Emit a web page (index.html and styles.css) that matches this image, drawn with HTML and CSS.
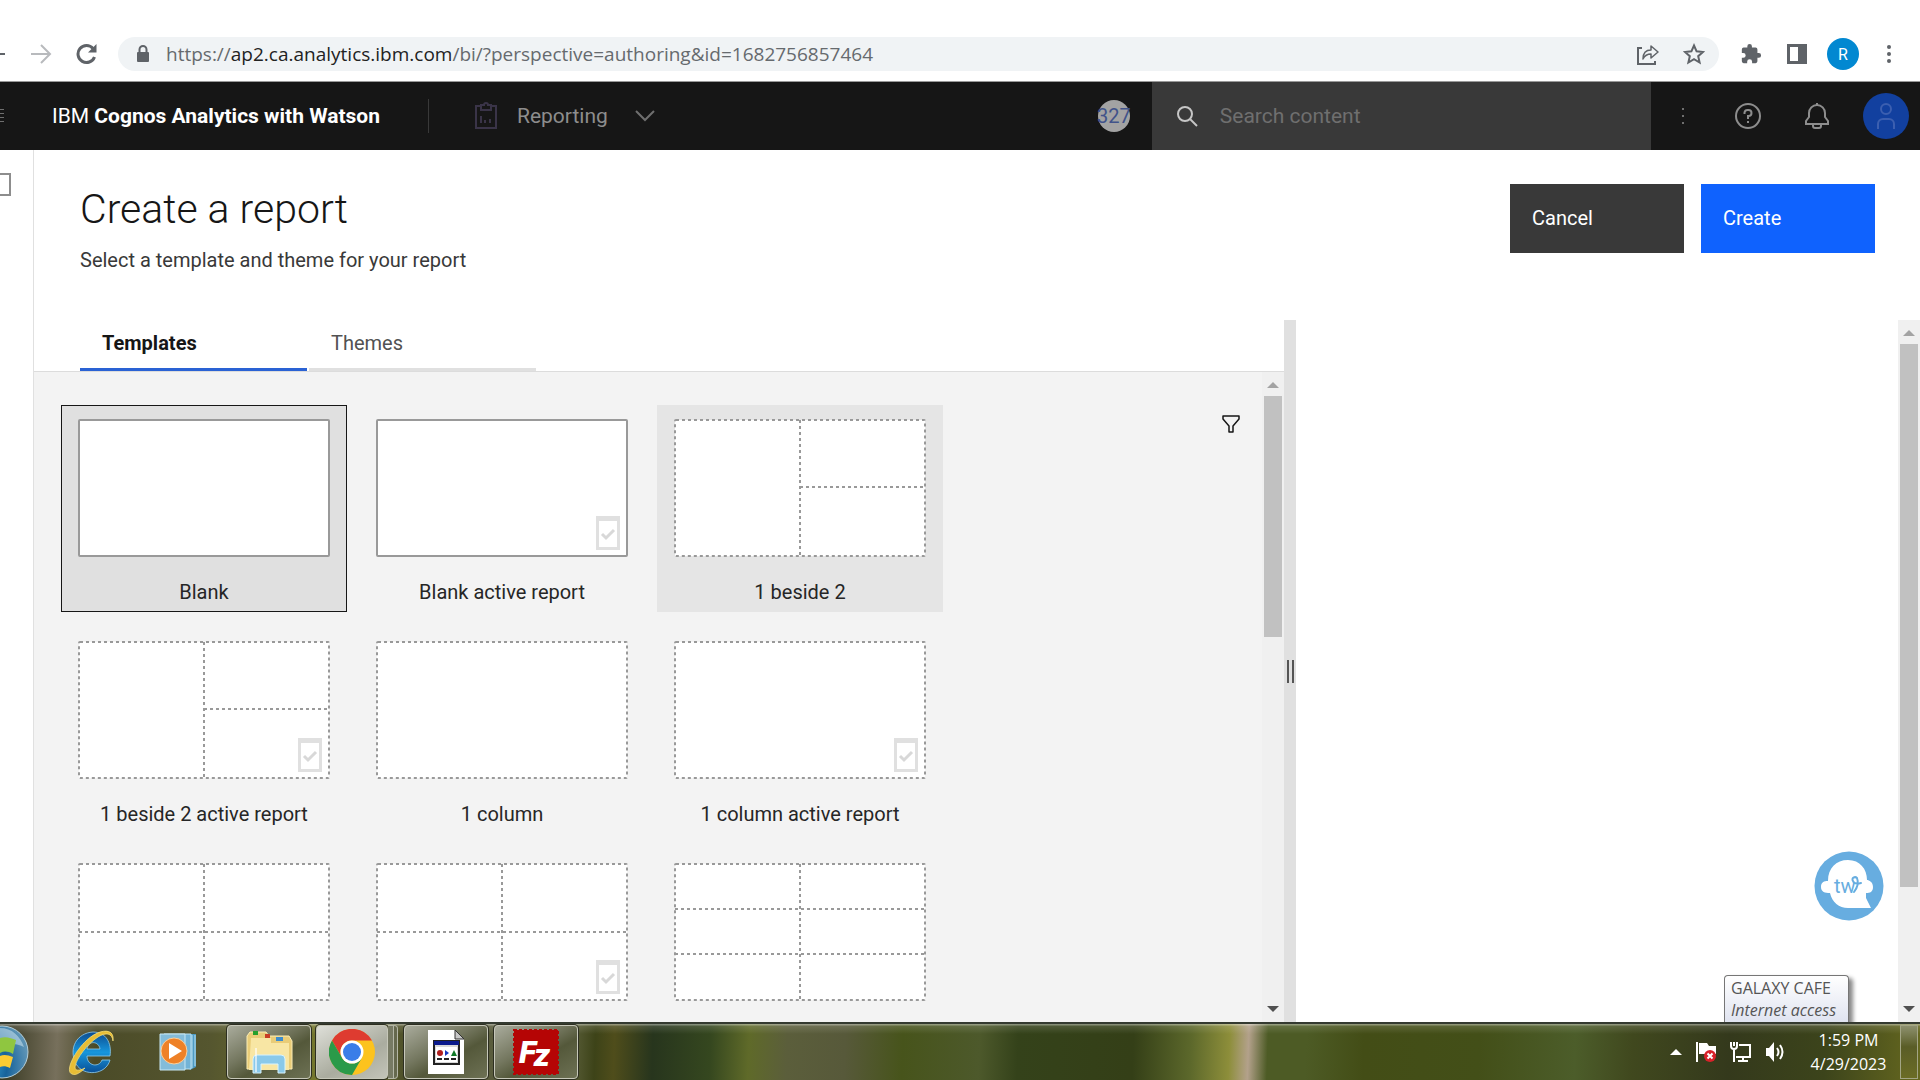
FILE: index.html
```html
<!DOCTYPE html>
<html lang="en">
<head>
<meta charset="utf-8">
<title>IBM Cognos Analytics with Watson</title>
<link rel="stylesheet" href="styles.css">
</head>
<body>
<svg class="defs" aria-hidden="true">
  <symbol id="frame" viewBox="0 0 252 138"><rect x="1" y="1" width="250" height="136" rx="1"/></symbol>
  <symbol id="report" viewBox="0 0 24 34"><path d="M1.500 1v31.500h21V1" fill="#fff" stroke="#e0e0e0" stroke-width="3"/><path d="M0 0h24v5H0z" fill="#e0e0e0" stroke="none"/><path d="M6 18l4 4 8-8" fill="none" stroke="#d8d8d8" stroke-width="3"/></symbol>
</svg>
<div class="screen">
  <header class="browser">
    <button class="plain back" aria-label="Back"><svg width="8" height="22" viewBox="0 0 8 22"><path d="M0 11h5" stroke="#5f6368" stroke-width="2"/></svg></button>
    <button class="plain" aria-label="Forward"><svg width="22" height="22" viewBox="0 0 22 22" fill="none" stroke="#b8babd" stroke-width="2"><path d="M1 11h18M11 2l9 9-9 9"/></svg></button>
    <button class="plain reload" aria-label="Reload"><svg width="22" height="22" viewBox="0 0 22 22" fill="none" stroke="#5f6368" stroke-width="3"><path d="M18.500 14a8.500 8.500 0 1 1-1.500-8.500"/><path d="M20.500 1v8.500H12z" fill="#5f6368" stroke="none"/></svg></button>
    <div class="omnibox">
      <svg width="14" height="18" viewBox="0 0 14 18"><rect x="1" y="7" width="12" height="10" rx="1" fill="#5f6368"/><path d="M3.500 8V4.500a3.500 3.500 0 0 1 7 0V8" fill="none" stroke="#5f6368" stroke-width="2"/></svg>
      <span class="url">https://<b>ap2.ca.analytics.ibm.com</b>/bi/?perspective=authoring&amp;id=1682756857464</span>
      <button class="plain" aria-label="Share"><svg width="22" height="22" viewBox="0 0 22 22" fill="none" stroke="#5f6368" stroke-width="2"><path d="M5 5H1v16h17v-3"/><path d="M6 16c0-6 3-9 8-9V3l7 6-7 6v-4c-4 0-6 1-8 5z" stroke-width="1.500" stroke-linejoin="round"/></svg></button>
      <button class="plain" aria-label="Bookmark"><svg width="22" height="22" viewBox="0 0 22 22" fill="none" stroke="#5f6368" stroke-width="2"><path d="M11 2.500l2.600 5.800 6.400.7-4.800 4.200 1.400 6.300-5.600-3.300-5.600 3.300 1.400-6.300L2 9l6.400-.7z"/></svg></button>
    </div>
    <button class="plain" aria-label="Extensions"><svg width="22" height="22" viewBox="0 0 24 24" fill="#5f6368"><path d="M20.500 11H19V7a2 2 0 0 0-2-2h-4V3.500a2.500 2.500 0 0 0-5 0V5H4a2 2 0 0 0-2 2v3.800h1.500a2.700 2.700 0 0 1 0 5.400H2V20a2 2 0 0 0 2 2h3.800v-1.500a2.700 2.700 0 0 1 5.400 0V22H17a2 2 0 0 0 2-2v-4h1.500a2.500 2.500 0 0 0 0-5z"/></svg></button>
    <button class="plain" aria-label="Side panel"><svg width="22" height="22" viewBox="0 0 22 22"><path d="M1 1h20v20H1zM4 4v14h8V4z" fill="#5f6368" fill-rule="evenodd"/></svg></button>
    <button class="profile">R</button>
    <button class="plain" aria-label="Menu"><svg width="6" height="22" viewBox="0 0 6 22" fill="#5f6368"><circle cx="3" cy="4" r="2"/><circle cx="3" cy="11" r="2"/><circle cx="3" cy="18" r="2"/></svg></button>
  </header>

  <nav class="appbar">
    <button class="plain" aria-label="Open menu"><svg width="4" height="16" viewBox="0 0 4 16" stroke="#6f6f6f"><path d="M0 1.500h4M0 5.500h4M0 9.500h4M0 13.500h4"/></svg></button>
    <a class="brand" href="#">IBM <b>Cognos Analytics with Watson</b></a>
    <button class="plain switcher">
      <svg width="22" height="28" viewBox="0 0 22 28" fill="none" stroke="#3a3448" stroke-width="2"><path d="M6 4H1v22h20V4h-5"/><path d="M6 3h3a2 2 0 0 1 4 0h3v5H6zM6 14v7M10 18v3M15 17v4"/></svg>
      <span>Reporting</span>
      <svg class="chev" width="20" height="12" viewBox="0 0 20 12" fill="none" stroke="#6f6f6f" stroke-width="2"><path d="M1 1l9 9 9-9"/></svg>
    </button>
    <span class="count">327</span>
    <label class="search">
      <svg width="22" height="22" viewBox="0 0 22 22" fill="none" stroke="#c6c6c6" stroke-width="2"><circle cx="9" cy="9" r="7"/><path d="M14 14l7 7"/></svg>
      <input type="search" placeholder="Search content" aria-label="Search content">
    </label>
    <div class="tools">
      <button class="plain more" aria-label="More"><svg width="4" height="18" viewBox="0 0 4 18" fill="#6f6f6f"><path d="M1 1h2v2H1zM1 8h2v2H1zM1 15h2v2H1z"/></svg></button>
      <button class="plain" aria-label="Help"><svg width="26" height="26" viewBox="0 0 26 26" fill="none" stroke="#8d8d8d" stroke-width="2"><circle cx="13" cy="13" r="12"/><path d="M9.500 11V9.500a3 3 0 0 1 3-2.500h1a3 3 0 0 1 0 6H13v3M13 18v2"/></svg></button>
      <button class="plain bell" aria-label="Notifications"><svg width="26" height="26" viewBox="0 0 26 26" fill="none" stroke="#8d8d8d" stroke-width="2"><path d="M13 0v3M2 21v-3l3-4v-4a8 8 0 0 1 16 0v4l3 4v3zM9 21v2a2 2 0 0 0 2 2h4a2 2 0 0 0 2-2v-2"/></svg></button>
      <button class="avatar" aria-label="Account"><svg width="20" height="26" viewBox="0 0 20 26" fill="none" stroke="#3c5fb0" stroke-width="2"><circle cx="10" cy="6" r="5"/><path d="M2 26v-5a5 5 0 0 1 5-5h6a5 5 0 0 1 5 5v5"/></svg></button>
    </div>
  </nav>

  <div class="workspace">
    <aside class="rail"><svg width="11" height="24" viewBox="0 0 11 24" fill="none" stroke="#8d8d8d" stroke-width="2"><path d="M0 1h10v21H0"/></svg></aside>
    <main class="page">
      <div class="heading">
        <div class="titles">
          <h1>Create a report</h1>
          <p>Select a template and theme for your report</p>
        </div>
        <button class="action cancel">Cancel</button>
        <button class="action create">Create</button>
      </div>
      <div class="split">
        <section class="chooser">
          <div class="tabs" role="tablist">
            <button class="tab active" role="tab" aria-selected="true">Templates</button>
            <button class="tab" role="tab" aria-selected="false">Themes</button>
          </div>
          <div class="gallery">
            <div class="cards">
              <button class="card selected"><svg class="thumb solid" viewBox="0 0 252 138"><use href="#frame"/></svg><span>Blank</span></button>
              <button class="card"><svg class="thumb solid" viewBox="0 0 252 138"><use href="#frame"/><use href="#report" x="220" y="97" width="24" height="34"/></svg><span>Blank active report</span></button>
              <button class="card hovered"><svg class="thumb" viewBox="0 0 252 138"><use href="#frame"/><path d="M126 1v136M126 68h125"/></svg><span>1 beside 2</span></button>
              <button class="card"><svg class="thumb" viewBox="0 0 252 138"><use href="#frame"/><path d="M126 1v136M126 68h125"/><use href="#report" x="220" y="97" width="24" height="34"/></svg><span>1 beside 2 active report</span></button>
              <button class="card"><svg class="thumb" viewBox="0 0 252 138"><use href="#frame"/></svg><span>1 column</span></button>
              <button class="card"><svg class="thumb" viewBox="0 0 252 138"><use href="#frame"/><use href="#report" x="220" y="97" width="24" height="34"/></svg><span>1 column active report</span></button>
              <button class="card"><svg class="thumb" viewBox="0 0 252 138"><use href="#frame"/><path d="M126 1v136M1 69h250"/></svg></button>
              <button class="card"><svg class="thumb" viewBox="0 0 252 138"><use href="#frame"/><path d="M126 1v136M1 69h250"/><use href="#report" x="220" y="97" width="24" height="34"/></svg></button>
              <button class="card"><svg class="thumb" viewBox="0 0 252 138"><use href="#frame"/><path d="M126 1v136M1 46h250M1 91h250"/></svg></button>
            </div>
            <button class="plain filter" aria-label="Filter"><svg width="20" height="20" viewBox="0 0 20 20" fill="none" stroke="#161616" stroke-width="1.500" stroke-linejoin="round"><path d="M2 2h16v3l-6 7v6H8v-6L2 5z"/></svg></button>
            <div class="scroll">
              <svg width="12" height="6" viewBox="0 0 12 6"><path d="M0 6l6-6 6 6z" fill="#a3a3a3"/></svg>
              <div class="track"><div class="bar short"></div></div>
              <svg width="12" height="6" viewBox="0 0 12 6"><path d="M0 0l6 6 6-6z" fill="#505050"/></svg>
            </div>
          </div>
        </section>
        <div class="divider"><i class="grip"></i></div>
        <section class="preview">
          <div class="scroll">
            <svg width="12" height="6" viewBox="0 0 12 6"><path d="M0 6l6-6 6 6z" fill="#a3a3a3"/></svg>
            <div class="track"><div class="bar long"></div></div>
            <svg width="12" height="6" viewBox="0 0 12 6"><path d="M0 0l6 6 6-6z" fill="#505050"/></svg>
          </div>
          <button class="plain chat" aria-label="Chat"><svg width="70" height="70" viewBox="0 0 70 70"><circle cx="35" cy="35" r="34.500" fill="#67ade0"/><path d="M14 30C14 17 22 9 34 9s19 9 19 20c2 0 6 2 6 7s-3 6-7 6v5l5 10H34c-9 0-16-6-18-15-5 0-9-1-9-6s3-6 7-6z" fill="#fff"/><text class="chat-mark" x="20" y="42">tw</text><path d="M40 41c3-4 5-9 3-14-2-2-6 0-4 3 1 3 4 3 8 2" fill="none" stroke="#67ade0" stroke-width="2" stroke-linecap="round"/></svg></button>
        </section>
      </div>
    </main>
  </div>

  <div class="tooltip" role="tooltip"><div>GALAXY CAFE</div><em>Internet access</em></div>

  <footer class="taskbar">
    <button class="plain orb" aria-label="Start"><svg width="29" height="56" viewBox="0 0 29 56"><defs><radialGradient id="orbfill" cx="0" cy=".75" r="1"><stop offset="0" stop-color="#4cc5f2"/><stop offset=".6" stop-color="#17639b"/><stop offset="1" stop-color="#5c93b5"/></radialGradient></defs><circle cx="2" cy="28" r="26" fill="url(#orbfill)" stroke="#b6cfd8" stroke-width="1"/><path d="M0 4c12 0 20 8 24 19-8-4-16-4-24-2z" fill="#d9eef6" opacity=".5"/><path d="M0 14c6-2 11 0 16 2l-3 14c-5-3-9-3-13-1z" fill="#8fc640"/><path d="M0 32c4-2 8-1 13 1l-3 11c-4-2-7-2-10-1z" fill="#fbcb32"/></svg></button>
    <button class="plain" aria-label="Internet Explorer"><svg width="48" height="48" viewBox="0 0 48 48"><defs><linearGradient id="iefill" x2="0" y2="1"><stop offset="0" stop-color="#0c4b8f"/><stop offset=".5" stop-color="#1796dc"/><stop offset="1" stop-color="#0a4f96"/></linearGradient></defs><path d="M43 28H20c0 10 12 12 15 4h8C39 47 17 49 9 36 1 20 10 5 26 4c13 0 19 11 17 24zM20 21h13c-1-8-12-9-13 0z" fill="url(#iefill)" stroke="#8ecdf0" stroke-width=".8"/><path d="M46 13C48-1 32 1 20 12 6 25-2 44 5 46c4 2 9-2 13-6-6 3-10 3-10-1 1-8 12-23 23-30 8-5 14-4 15 4z" fill="#e8bd35" stroke="#f8e27e" stroke-width=".7"/></svg></button>
    <button class="plain media" aria-label="Media Player"><svg width="38" height="40" viewBox="0 0 38 40"><path d="M9 2h28v33l-6 3z" fill="#4e9bc4"/><path d="M5 2h27v35H5zM33 3v33M36 3v31" fill="#72b3d6" stroke="#b9e1f2"/><path d="M1 2h25v36H1z" fill="#84bcd9" stroke="#c8e8f4"/><circle cx="15" cy="19" r="13" fill="#ee8127" stroke="#fbd09c"/><path d="M10 11v16l13-8z" fill="#fff"/></svg></button>
    <button class="task explorer" aria-label="Explorer"><svg width="48" height="48" viewBox="0 0 48 48"><path d="M2 8l3-4h16l3 4h20l3 5v28H2z" fill="#e9cc77" stroke="#fbedb7"/><path d="M6 10h20v5h18v27H4z" fill="#f8e6a4"/><path d="M8 3h5v4H8z" fill="#25a02c"/><path d="M20 6h5v4h-5z" fill="#c83d25"/><path d="M31 9h7v4h-7z" fill="#3e8ccb"/><path d="M8 45V31q0-4 4-4h24q4 0 4 4v14h-7V36H16v9z" fill="#8ac9ea" stroke="#d9f3fd"/><path d="M11 20v24" stroke="#fff" stroke-width="2" opacity=".6"/></svg></button>
    <button class="task chrome" aria-label="Chrome"><svg width="46" height="46" viewBox="0 0 46 46"><circle cx="23" cy="23" r="23" fill="#fcc31e"/><path d="M3 11.500A23 23 0 0 1 43 11.500H23A11.500 11.500 0 0 0 13 28.800z" fill="#de3b30"/><path d="M3 11.500A23 23 0 0 0 23 46L33 28.800A11.500 11.500 0 0 1 13 28.800z" fill="#2a9a49"/><circle cx="23" cy="23" r="11.500" fill="#fff"/><circle cx="23" cy="23" r="9" fill="#3a7de8"/></svg></button>
    <span class="stack"></span>
    <button class="task doc" aria-label="Program"><svg width="36" height="44" viewBox="0 0 36 44"><path d="M0 0h27l9 9v35H0z" fill="#fff"/><path d="M27 0v9h9z" fill="#c8c8c8" stroke="#333"/><path d="M6 11h25v23H6z" fill="#d8d8d8" stroke="#222" stroke-width="2"/><path d="M6 11h25v4H6z" fill="#0a1a8c"/><path d="M8 17h21v15H8z" fill="#fff"/><circle cx="12" cy="23" r="3" fill="#b01e1e"/><path d="M17 20l4 3-4 3z" fill="#1838c0"/><path d="M23 26l3-6 3 6z" fill="#107a28"/><path d="M9 29h19" stroke="#222" stroke-width="2" stroke-dasharray="5 2"/></svg></button>
    <button class="task fz" aria-label="FileZilla"><svg width="46" height="46" viewBox="0 0 46 46"><rect x="1" y="1" width="44" height="44" fill="#b50505" stroke="#b50505" stroke-width="2" stroke-dasharray="3 2"/><text class="fz-mark" x="6" y="34">F</text><text class="fz-mark" x="21" y="37">z</text></svg></button>
    <div class="tray">
      <svg width="12" height="8" viewBox="0 0 12 8"><path d="M0 7l6-6 6 6z" fill="#fff"/></svg>
      <svg width="22" height="22" viewBox="0 0 22 22"><path d="M2 1v20" stroke="#fff" stroke-width="2"/><path d="M4 2h8l2 3h7v8H4z" fill="#fff"/><circle cx="15" cy="15" r="6" fill="#d8222a"/><path d="M12.500 12.500l5 5m0-5l-5 5" stroke="#fff" stroke-width="2"/></svg>
      <svg width="22" height="22" viewBox="0 0 22 22" fill="none" stroke="#fff" stroke-width="2"><path d="M9 4h11v12H6M13 16v4M8 20h10M4 9v12M1 1v4q0 3 3 3t3-3V1M4 1v4"/></svg>
      <svg width="20" height="22" viewBox="0 0 20 22"><path d="M1 7h3l5-6v20l-5-6H1z" fill="#fff"/><path d="M12 7q3 4 0 8M15 4q5 7 0 14" fill="none" stroke="#fff" stroke-width="2"/></svg>
    </div>
    <div class="clock"><div>1:59 PM</div><div>4/29/2023</div></div>
    <button class="desktop" aria-label="Show desktop"></button>
  </footer>
</div>
</body>
</html>
```
FILE: styles.css
```css
* { box-sizing: border-box; }
body { margin: 0; background: #fff; font-family: Roboto, "Liberation Sans", sans-serif; font-size: 20px; color: #161616; }
button { font: inherit; cursor: pointer; }
svg { display: block; flex: none; }
.defs { position: absolute; width: 0; height: 0; }
.plain { border: 0; padding: 0; background: none; flex: none; color: inherit; }
.screen { position: relative; height: 100vh; min-height: 600px; display: flex; flex-direction: column; overflow: hidden; }

/* browser toolbar */
.browser { flex: none; height: 82px; padding: 27px 28px 0 0; display: flex; align-items: center; gap: 24px; border-bottom: 1px solid #999; }
.back { width: 6px; }
.reload { margin-right: -2px; }
.omnibox { flex: 1; height: 34px; border-radius: 17px; background: #f0f3f5; display: flex; align-items: center; gap: 24px; padding: 0 14px 0 18px; margin: 0 -3px 0 -2px; }
.url { flex: 1; margin-left: -8px; font-family: "Open Sans", sans-serif; font-size: 19px; color: #666a6e; white-space: nowrap; }
.url b { font-weight: 400; color: #222; }
.profile { width: 32px; height: 32px; margin: 0 3px 0 -5px; border: 0; border-radius: 50%; background: #0288d1; color: #fff; font-size: 16px; padding: 0; }

/* application bar */
.appbar { flex: none; height: 68px; background: #161616; display: flex; align-items: center; }
.brand { color: #fff; text-decoration: none; margin-left: 48px; font-size: 21px; white-space: nowrap; }
.brand b { font-weight: 700; }
.switcher { margin-left: 48px; padding-left: 46px; height: 34px; border-left: 1px solid #393939; display: flex; align-items: center; color: #8d8d8d; font-size: 21px; }
.switcher span { margin-left: 20px; }
.chev { margin-left: 27px; }
.count { margin-left: auto; margin-right: 22px; width: 32px; height: 32px; border-radius: 50%; background: #a3a3a3; color: #41538a; display: flex; align-items: center; justify-content: center; }
.search { width: 26%; height: 100%; background: #393939; display: flex; align-items: center; gap: 22px; padding: 0 24px; }
.search input { flex: 1; min-width: 0; border: 0; padding: 0; background: none; outline: 0; color: #fff; font: inherit; font-size: 21px; }
.search input::placeholder { color: #6f6f6f; opacity: 1; }
.tools { width: 269px; padding: 0 11px 0 30px; display: flex; align-items: center; justify-content: space-between; }
.more { margin-right: 8px; }
.bell { margin-right: -9px; }
.avatar { width: 46px; height: 46px; border: 0; padding: 0; border-radius: 50%; background: #12409f; display: flex; align-items: center; justify-content: center; }

/* page */
.workspace { flex: 1; min-height: 0; display: flex; }
.rail { width: 34px; flex: none; border-right: 1px solid #e0e0e0; padding-top: 23px; }
.page { flex: 1; min-width: 0; display: flex; flex-direction: column; }
.heading { flex: none; height: 170px; padding: 34px 45px 0 46px; display: flex; align-items: flex-start; gap: 17px; }
.titles { flex: 1; }
h1 { margin: 0; font-size: 41px; line-height: 50px; font-weight: 300; }
p { margin: 13px 0 0; line-height: 26px; color: #393939; }
.action { width: 174px; height: 69px; border: 0; padding: 0 22px 2px; text-align: left; color: #fff; }
.cancel { background: #393939; }
.create { background: #0f62fe; }

.split { flex: 1; min-height: 0; display: flex; }
.chooser { flex: 1250; min-width: 0; display: flex; flex-direction: column; }
.tabs { flex: none; height: 52px; padding-left: 46px; display: flex; gap: 2px; border-bottom: 1px solid #dcdcdc; }
.tab { width: 227px; border: 0; border-bottom: 3px solid #e0e0e0; background: none; padding: 0 22px 3px; text-align: left; color: #525252; }
.tab.active { border-color: #2a62d4; font-weight: 700; color: #161616; }
.gallery { flex: 1; min-height: 0; background: #f3f3f3; display: flex; align-items: flex-start; }
.cards { flex: 1; min-width: 0; padding: 33px 0 0 27px; display: grid; grid-template-columns: repeat(3, 286px); grid-auto-rows: 207px; gap: 15px 12px; max-height: 100%; overflow: hidden; }
.card { border: 1px solid transparent; background: none; padding: 13px 16px; display: flex; flex-direction: column; align-items: center; gap: 23px; color: #262626; }
.card.selected { background: #e0e0e0; border-color: #161616; }
.card.hovered { background: #e5e5e5; }
.thumb { width: 252px; height: 138px; fill: #fff; stroke: #999; stroke-width: 2; stroke-dasharray: 3 3; }
.thumb.solid { stroke-dasharray: none; }
.thumb use[href="#report"] { stroke-dasharray: none; }
.filter { margin: 42px 21px 0 0; }
.scroll { width: 22px; flex: none; align-self: stretch; background: #f0f0f0; padding: 10px 0; display: flex; flex-direction: column; align-items: center; gap: 8px; }
.track { flex: 1; width: 18px; }
.bar { background: #c1c1c1; }
.bar.short { height: 40%; }
.bar.long { height: 83%; }
.divider { width: 12px; flex: none; background: #e0e0e0; display: flex; align-items: center; justify-content: center; }
.grip { width: 7px; height: 23px; border: solid #555; border-width: 0 2px; }
.preview { flex: 624; position: relative; display: flex; justify-content: flex-end; }
.chat { position: absolute; right: 36px; bottom: 101px; }
.chat-mark { font-size: 20px; fill: #67ade0; }

/* network tooltip */
.tooltip { position: absolute; right: 71px; bottom: 57px; width: 125px; padding: 1px 6px 2px; border: 1px solid #767676; border-bottom: 0; border-radius: 4px 4px 0 0; background: linear-gradient(#fff, #dfe3f0); box-shadow: 4px 3px 4px #888; color: #555; font-family: "Open Sans", sans-serif; font-size: 16px; line-height: 22px; white-space: nowrap; }

/* taskbar */
.taskbar { position: relative; flex: none; height: 58px; border-top: 2px solid #343a30; display: flex; align-items: center; color: #fff;
  background: linear-gradient(#ffffff66 0 1px, #ffffff22 2px, transparent 10px), linear-gradient(92deg, #33351e 0, #77705c 3%, #4b4b28 5%, #55562f 11%, #777a2c 17%, #46482a 22%, #6c6f4e 29%, #3d4318 31%, #4f4d1b 32%, #27351d 34%, #35471f 37%, #5f6a29 39%, #5b5e3b 41%, #57593a 44%, #47541b 47%, #4d592b 51%, #34421a 53%, #343f17 59%, #5c682b 62%, #8d8e3a 64%, #b3a18b 65%, #4d5b25 66%, #4d5b25 68%, #434d16 71%, #434f18 77%, #4c5d2a 82%, #40481e 85%, #34391c 90%, #3c441b 95%, #66681f 100%); }
.orb { width: 29px; overflow: hidden; }
.orb + .plain { margin-left: 38px; }
.media { margin: 0 30px 0 44px; }
.task { height: 54px; width: 84px; flex: none; display: flex; align-items: center; justify-content: center; padding: 0; border: 1px solid #c6c7b9; border-radius: 4px; box-shadow: 0 0 0 1px #2c2e20; background: linear-gradient(150deg, #a9ab9c 0, #74775f 40%, #54583a 60%, #6d7154 100%); }
.chrome { width: 72px; margin-left: 5px; background: linear-gradient(150deg, #dedfd8, #aaac9f 60%, #c3c4b8); }
.stack { width: 10px; height: 54px; border: solid #b4b6a6; border-width: 1px 1px 1px 0; border-radius: 0 4px 4px 0; background: linear-gradient(90deg, #777a64 5px, #b4b6a6 5px 6px, #65684d 6px); margin-right: 6px; }
.fz { margin-left: 6px; }
.fz-mark { font-size: 32px; font-weight: 900; font-style: italic; fill: #fff; }
.tray { margin-left: auto; display: flex; align-items: center; gap: 13px; }
.clock { flex: none; width: 101px; margin: 0 1px 0 13px; text-align: center; font-family: "Open Sans", sans-serif; font-size: 16px; line-height: 24px; }
.desktop { width: 18px; height: 54px; flex: none; margin-right: 2px; padding: 0; border: 1px solid #a3a585; background: linear-gradient(#8d906e, #5a5d27 40%, #6b6c25); }
```
